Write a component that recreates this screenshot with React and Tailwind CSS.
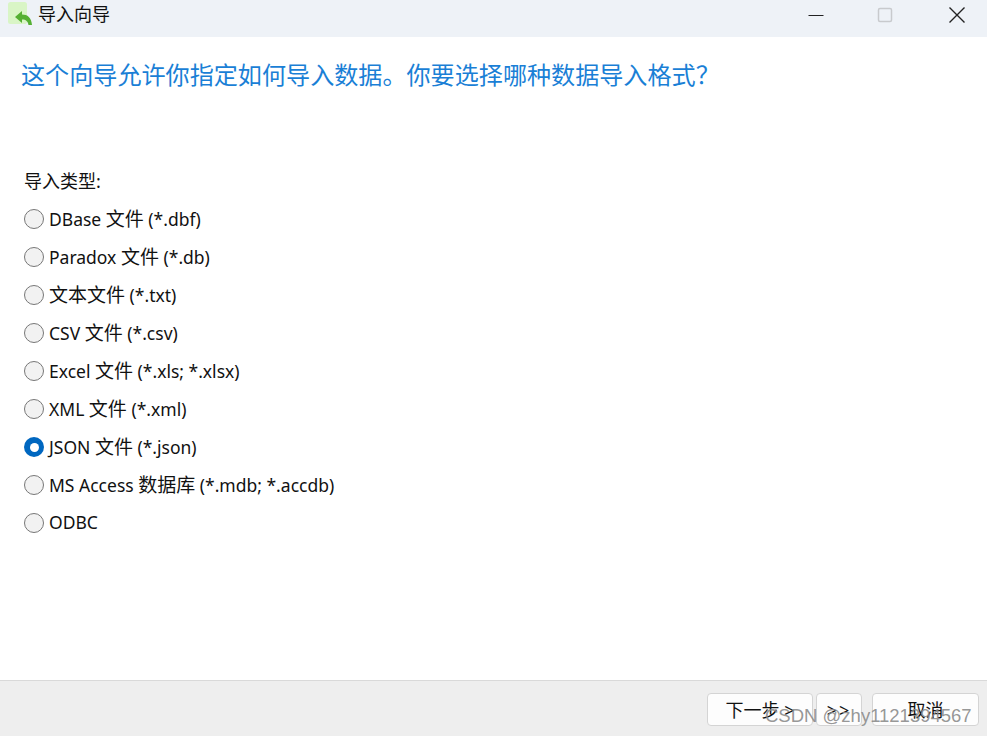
// App.jsx - import wizard, step one

import React, { useState } from 'react';

const FONT = "font-['Noto_Sans','Noto_Sans_CJK_SC',sans-serif]";

const FORMATS = [
  'DBase 文件 (*.dbf)',
  'Paradox 文件 (*.db)',
  '文本文件 (*.txt)',
  'CSV 文件 (*.csv)',
  'Excel 文件 (*.xls; *.xlsx)',
  'XML 文件 (*.xml)',
  'JSON 文件 (*.json)',
  'MS Access 数据库 (*.mdb; *.accdb)',
  'ODBC',
];

function AppIcon() {
  return (
    <svg width="33" height="27" viewBox="0 0 33 27" className="shrink-0">
      <rect x="8" y="2" width="19" height="22" rx="2.5" fill="#d9f5c6" />
      <path d="M15 17l7-6v3.500c5.500 0 9.500 3 10 10.500h-3.500c-.5-3.500-2.500-5.500-6.500-5.500v3.500z" fill="#55b033" />
    </svg>
  );
}

// CJK glyphs run a little larger than the latin text in the original
function MixedLabel({ text }) {
  return text.split(/([\u4e00-\u9fff]+)/).map((part, i) =>
    i % 2 === 1 ? <span key={i} className="text-[19px]">{part}</span> : <span key={i}>{part}</span>
  );
}

function Radio({ label, checked, onSelect }) {
  return (
    <label className="flex h-[38px] items-center gap-[5px] cursor-pointer" onClick={onSelect}>
      {checked ? (
        <span className="flex h-[20px] w-[20px] shrink-0 items-center justify-center rounded-full bg-[#0067c0]">
          <span className="h-[9px] w-[9px] rounded-full bg-white" />
        </span>
      ) : (
        <span className="h-[20px] w-[20px] shrink-0 rounded-full border border-[#777] bg-[#f2f2f2]" />
      )}
      <span className="text-[17.5px] leading-none text-[#111] whitespace-nowrap">
        <MixedLabel text={label} />
      </span>
    </label>
  );
}

function FooterButton({ children, className }) {
  return (
    <button className={`h-[33px] rounded-[4px] border border-[#d4d4d4] bg-[#fdfdfd] text-[18px] leading-none text-[#111] ${className}`}>
      {children}
    </button>
  );
}

export default function App() {
  const [selected, setSelected] = useState(6);

  return (
    <div className={`relative flex h-[736px] w-[987px] flex-col overflow-hidden bg-white ${FONT}`}>

      {/* Title bar */}
      <div className="flex h-[37px] shrink-0 items-start bg-[#eef2f7]">
        <div className="flex items-center">
          <AppIcon />
          <span className="ml-[5px] text-[18px] leading-none text-[#111]">导入向导</span>
        </div>
        <div className="ml-auto flex items-center pt-[6px]">
          <svg width="16" height="16" viewBox="0 0 16 16" className="mr-[53px]">
            <path d="M0.500 8.500h15" stroke="#222" strokeWidth="1" />
          </svg>
          <svg width="16" height="16" viewBox="0 0 16 16" className="mr-[55px]">
            <rect x="1.500" y="1.500" width="13" height="13" rx="1.500" fill="none" stroke="#c8cacd" strokeWidth="1.500" />
          </svg>
          <svg width="18" height="18" viewBox="0 0 18 18" className="mr-[21px]">
            <path d="M1.500 1.500l15 15M16.500 1.500l-15 15" stroke="#222" strokeWidth="1.400" />
          </svg>
        </div>
      </div>

      {/* Body */}
      <div className="flex-1 px-[21px]">
        <h1 className="mt-[22px] h-[32px] text-[24.1px] font-normal leading-[32px] text-[#1a7fd6] whitespace-nowrap">
          这个向导允许你指定如何导入数据。你要选择哪种数据导入格式？
        </h1>
        <div className="mt-[77px] pl-[3px]">
          <div className="h-[32px] text-[18px] leading-[26px] text-[#111]">导入类型:</div>
          <div className="flex flex-col">
            {FORMATS.map((f, i) => (
              <Radio key={f} label={f} checked={selected === i} onSelect={() => setSelected(i)} />
            ))}
          </div>
        </div>
      </div>

      {/* Footer */}
      <div className="flex h-[56px] shrink-0 items-start justify-end border-t border-[#d9d9d9] bg-[#eeeeee] pr-[8px] pt-[12px]">
        <FooterButton className="w-[106px]">下一步 &gt;</FooterButton>
        <FooterButton className="ml-[3px] w-[46px] tracking-[2px]">&gt;&gt;</FooterButton>
        <FooterButton className="ml-[10px] w-[107px]">取消</FooterButton>
      </div>

      {/* Watermark over the footer */}
      <span className="absolute left-[765px] top-[705px] text-[18.5px] leading-[22px] text-[#8a8a8a]/90 font-['Liberation_Sans',sans-serif] whitespace-nowrap">
        CSDN @zhy1121394567
      </span>
    </div>
  );
}
